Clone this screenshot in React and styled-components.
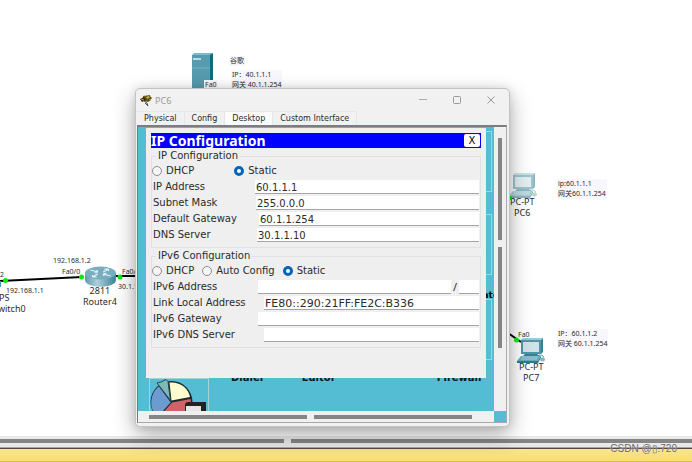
import React from "react";
import styled, { createGlobalStyle, css } from "styled-components";

const GlobalStyle = createGlobalStyle`
  * {
    box-sizing: border-box;
  }
  body {
    margin: 0;
    background: #ffffff;
    font-family: "Noto Sans", "Noto Sans CJK SC", sans-serif;
    color: #2b2b2b;
  }
`;

const Page = styled.div`
  display: flex;
  flex-direction: column;
  min-height: 100vh;
  position: relative;
  overflow: hidden;
`;

const Canvas = styled.main`
  flex: 1;
  min-height: 436px;
  position: relative;
`;

const RightSide = styled.div`
  position: absolute;
  top: 0;
  right: 0;
  bottom: 0;
  width: 182px;
`;

const Node = styled.div`
  position: absolute;
  left: ${(p) => p.$x}px;
  top: ${(p) => p.$y}px;
  opacity: ${(p) => (p.$faded ? 0.55 : 1)};
  svg {
    display: block;
  }
`;

const NodeLabel = styled.div`
  position: absolute;
  left: ${(p) => p.$x}px;
  top: ${(p) => p.$y}px;
  font-size: 9px;
  line-height: 11px;
  text-align: center;
  white-space: pre-line;
`;

const Note = styled.div`
  position: absolute;
  left: ${(p) => p.$x}px;
  top: ${(p) => p.$y}px;
  padding: 0 1px;
  font-size: 7px;
  line-height: 10px;
  white-space: pre;
  background: ${(p) => (p.$plain ? "transparent" : "#f7f7fd")};
`;

const Links = styled.svg`
  position: absolute;
  left: 0;
  top: 0;
`;

/* window */

const Window = styled.section`
  position: absolute;
  left: 135px;
  right: 182px;
  top: 88px;
  padding: 0 2px 3px 1px;
  border: 1px solid #c3c3c6;
  border-radius: 5px;
  background: #f1f1f1;
  box-shadow: 0 8px 22px rgba(0, 0, 0, 0.32), 0 0 8px rgba(0, 0, 0, 0.1);
`;

const TitleBar = styled.header`
  display: flex;
  align-items: center;
  height: 22px;
  padding: 0 11px 0 3px;
  gap: 2px;
`;

const WindowTitle = styled.span`
  flex: 1;
  font-size: 9px;
  color: #9a9a9a;
`;

const WindowButtons = styled.div`
  display: flex;
  gap: 24px;
`;

const WindowButton = styled.button`
  display: flex;
  padding: 0;
  border: 0;
  background: none;
`;

const Tabs = styled.nav`
  display: flex;
  height: 14px;
`;

const Tab = styled.button`
  padding: 0 7px;
  border: 0;
  border-top: 1px solid #e8e8e8;
  border-right: 1px solid #e6e6e6;
  background: ${(p) => (p.$active ? "#fbfbfb" : "#f1f1f1")};
  font-family: "DejaVu Sans", sans-serif;
  font-size: 8px;
  line-height: 13px;
  color: #2b2b2b;
`;

const Frame = styled.div`
  display: grid;
  grid-template-columns: 1fr 12px;
  grid-template-rows: auto 11px;
  border: 1px solid #a8a8a8;
  border-top: 2px solid #7d7d7d;
  border-left-color: #777777;
`;

const Desktop = styled.div`
  position: relative;
  padding: 1px 8px 0;
  overflow: hidden;
  background: #54bdd4;
`;

const Tile = styled.div`
  position: absolute;
  right: 2px;
  top: ${(p) => p.$top}px;
  width: 60px;
  height: 61px;
  border: 1px solid #9bd6d8;
  ${(p) =>
    p.$glow &&
    css`
      background: radial-gradient(ellipse 8px 22px at right 2px center, #2d8fc4, transparent);
    `}
`;

const SideLabel = styled.div`
  position: absolute;
  right: -5px;
  top: 162px;
  font: bold 9px/13px "DejaVu Sans", sans-serif;
  color: #000000;
`;

const Dialog = styled.form`
  position: relative;
  padding: 5px 5px 30px;
  background: #efefef;
`;

const DialogHeader = styled.div`
  display: flex;
  align-items: center;
  justify-content: space-between;
  height: 15px;
  padding-right: 1px;
  background: #0000ff;
`;

const DialogTitle = styled.h1`
  margin: 0;
  font-size: 14px;
  line-height: 15px;
  color: #ffffff;
`;

const CloseButton = styled.button`
  width: 16px;
  height: 13px;
  padding: 0;
  border: 0;
  border-radius: 2px;
  background: #fdfdfd;
  font-family: "DejaVu Sans", sans-serif;
  font-size: 10px;
  line-height: 13px;
  color: #000000;
`;

const Group = styled.fieldset`
  min-width: 0;
  margin: 2px 0 0;
  padding: 0 1px 4px 0;
  border: 1px solid #e1e1e1;
`;

const Legend = styled.legend`
  margin-left: 4px;
  padding: 0 2px;
  font-family: "DejaVu Sans", sans-serif;
  font-size: 10px;
  line-height: 12px;
`;

const RadioRow = styled.div`
  display: flex;
  align-items: center;
  gap: ${(p) => p.$gap}px;
  height: 17px;
`;

const RadioLabel = styled.label`
  display: flex;
  align-items: center;
  gap: 4px;
  font-family: "DejaVu Sans", sans-serif;
  font-size: 10px;
  line-height: 16px;
`;

const Radio = styled.input`
  appearance: none;
  width: 10px;
  height: 10px;
  margin: 0;
  border: 1px solid #8e8e8e;
  border-radius: 50%;
  background: #f6f6f6;
  &:checked {
    border: 3px solid #0563b8;
    background: #ffffff;
  }
`;

const FieldRow = styled.div`
  display: flex;
  align-items: center;
  height: 16px;
`;

const FieldLabel = styled.label`
  flex: none;
  width: ${(p) => p.$width}px;
  padding-left: 1px;
  font-family: "DejaVu Sans", sans-serif;
  font-size: 10px;
  line-height: 16px;
  white-space: nowrap;
`;

const Field = styled.input`
  flex: ${(p) => (p.$short ? "none" : "1")};
  width: ${(p) => (p.$short ? "20px" : "auto")};
  min-width: 0;
  height: 14px;
  padding: 1px 0 0 1px;
  border: 0;
  border-bottom: 1px solid #a5a5a5;
  background: #ffffff;
  font-family: "DejaVu Sans", sans-serif;
  font-size: ${(p) => (p.$large ? 11 : 10)}px;
  color: #2b2b2b;
`;

const Slash = styled.span`
  width: 8px;
  text-align: center;
  font-size: 11px;
  line-height: 14px;
`;

const Shelf = styled.div`
  display: flex;
  height: 33px;
  padding-left: 3px;
  overflow: hidden;
`;

const PieTile = styled.div`
  flex: none;
  width: 60px;
  border: 1px solid #a5d4cf;
  border-bottom: 0;
  svg {
    display: block;
  }
`;

const ShelfLabel = styled.span`
  margin-top: -7px;
  margin-left: ${(p) => p.$gap}px;
  font: bold 10px/13px "DejaVu Sans", sans-serif;
  color: #0a1a1e;
`;

const VScroll = styled.div`
  display: flex;
  flex-direction: column;
  gap: 7px;
  align-items: center;
  padding: 11px 0 63px;
  background: #f0f0f0;
`;

const HScroll = styled.div`
  display: flex;
  gap: 7px;
  align-items: center;
  padding: 0 22px 0 11px;
  background: #f0f0f0;
`;

const Thumb = styled.div`
  flex: ${(p) => p.$grow || 1};
  min-width: 4px;
  min-height: 4px;
  background: #848584;
`;

const Corner = styled.div`
  background: #54bdd4;
`;

/* bars under the canvas */

const PageScroll = styled.div`
  display: flex;
  align-items: center;
  gap: 7px;
  height: 12px;
  padding-bottom: 1px;
  background: #e9e9e9;
  border-bottom: 1px solid #a5a5a5;
`;

const StatusBar = styled.footer`
  height: 14px;
  border-top: 1px solid #51493c;
  border-bottom: 1px solid #d5bd50;
  background: linear-gradient(#f9e391, #fadf6c);
`;

const Watermark = styled.div`
  position: absolute;
  right: 15px;
  bottom: 6px;
  font: 10px/14px "Liberation Sans", sans-serif;
  color: #666666;
  text-shadow: 0 0 1px #ffffff;
`;

const PcIcon = () => (
  <svg width="30" height="26" viewBox="0 0 30 26">
    <path d="M4 2l2-2h20l-2 2z" fill="#9ccbd5" />
    <path d="M24 2l2-2v14l-2 2z" fill="#377f93" />
    <rect x="4" y="2" width="20" height="14" fill="#4c96aa" />
    <rect x="6" y="4" width="16" height="10" fill="#cfe2e8" />
    <path d="M8 16h12l3 2H6z" fill="#377f93" />
    <path d="M4 18h20l-3 5H0z" fill="#68aabc" />
    <path d="M0 23h21l3-5v2l-3 5H0z" fill="#35798c" />
    <path d="M5 19h16M4 21h16" stroke="#a9d2dc" />
    <path d="M22 17c4 0 5 1 4 3" stroke="#4c96aa" fill="none" />
    <ellipse cx="25.500" cy="21.500" rx="2.500" ry="2" fill="#7fb6c5" />
  </svg>
);

const ServerIcon = () => (
  <svg width="22" height="35" viewBox="0 0 22 35">
    <path d="M0 2l2-2h19l-2 2z" fill="#7cbac7" />
    <path d="M18 2l3-2v33l-3 2z" fill="#14697e" />
    <rect y="2" width="18" height="33" fill="#569bae" />
    <path d="M1 5h8v2H1z" fill="#b8dce3" />
    <path d="M0 15h18" stroke="#77b3c2" />
  </svg>
);

const RouterIcon = () => (
  <svg width="32" height="21" viewBox="0 0 30 21" preserveAspectRatio="none">
    <defs>
      <linearGradient id="routerSide">
        <stop offset="0" stopColor="#5d9ab0" />
        <stop offset="0.4" stopColor="#acd0db" />
        <stop offset="1" stopColor="#3d7f98" />
      </linearGradient>
    </defs>
    <path d="M0 7v7c0 9 29 9 29 0V7z" fill="url(#routerSide)" />
    <ellipse cx="14.500" cy="7" rx="14.500" ry="6.500" fill="#78adbf" />
    <path
      d="M5 4l7 2M12 6l-3 1M12 6l-1-2M24 10l-7-2M17 8l3-1M17 8l1 2M17 6l5-3M22 3h-4M22 3v2M12 8l-5 3M7 11h4M7 11V9"
      stroke="#e5f2f5"
      strokeWidth="1.200"
      fill="none"
    />
  </svg>
);

const AppIcon = () => (
  <svg width="13" height="13" viewBox="0 0 13 13">
    <path d="M3 2l7-1 1 5-3 2-5-1z" fill="#695925" />
    <path d="M0 5l4-2 2 3-4 2zM5 4l4-2 3 2-3 3z" fill="#342d13" />
    <path d="M6 3l3-1 1 2-3 1z" fill="#d0b52a" />
    <path d="M1 5l3 1M9 6l2-1" stroke="#c8a92a" />
    <path d="M4 7l3 2 1 3-3-3" fill="none" stroke="#555" />
    <circle cx="7.500" cy="5.500" r="1" fill="#397a35" />
  </svg>
);

const PieIcon = () => (
  <svg width="58" height="32" viewBox="0 0 58 32">
    <circle cx="21.500" cy="23" r="21" fill="#1d2730" />
    <path d="M20 22.500L9 7.500C2 12-1 24 3 32h10l8-9z" fill="#6c9bd1" />
    <path d="M21.500 21.500L19.500 3.500c11-1 19 6 20.500 14.500z" fill="#fffdd0" />
    <path d="M22 23.500l18.500-3.500c1 4 0 8-1 12H14.500z" fill="#cf6468" />
    <path d="M20.500 21.500L7 4l4-1 5-2.500 2 2z" fill="#7eb8b8" stroke="#26444a" />
    <path d="M35 25l2-2h19v9H35z" fill="#222" />
    <path d="M36 27h15v5H36z" fill="#e6e6e6" />
  </svg>
);

const ipFields = [
  { id: "ip", label: "IP Address", value: "60.1.1.1", width: 103 },
  { id: "mask", label: "Subnet Mask", value: "255.0.0.0", width: 104 },
  { id: "gateway", label: "Default Gateway", value: "60.1.1.254", width: 107 },
  { id: "dns", label: "DNS Server", value: "30.1.1.10", width: 105 },
];

const ipv6Fields = [
  { id: "ip6", label: "IPv6 Address", value: "", width: 106, prefix: true },
  { id: "local6", label: "Link Local Address", value: "FE80::290:21FF:FE2C:B336", width: 112, large: true },
  { id: "gateway6", label: "IPv6 Gateway", value: "", width: 106 },
  { id: "dns6", label: "IPv6 DNS Server", value: "", width: 112 },
];

const tabs = ["Physical", "Config", "Desktop", "Custom Interface"];

function ConfigGroup({ title, name, modes, gap, fields }) {
  return (
    <Group>
      <Legend>{title}</Legend>
      <RadioRow $gap={gap}>
        {modes.map((mode) => (
          <RadioLabel key={mode}>
            <Radio type="radio" name={name} defaultChecked={mode === "Static"} />
            {mode}
          </RadioLabel>
        ))}
      </RadioRow>
      {fields.map((field) => (
        <FieldRow key={field.id}>
          <FieldLabel htmlFor={field.id} $width={field.width}>
            {field.label}
          </FieldLabel>
          <Field id={field.id} defaultValue={field.value} $large={field.large} />
          {field.prefix && (
            <>
              <Slash>/</Slash>
              <Field $short aria-label="Prefix length" />
            </>
          )}
        </FieldRow>
      ))}
    </Group>
  );
}

function ConfigWindow() {
  return (
    <Window>
      <TitleBar>
        <AppIcon />
        <WindowTitle>PC6</WindowTitle>
        <WindowButtons>
          <WindowButton aria-label="Minimize">
            <svg width="10" height="10" viewBox="0 0 10 10" stroke="#aaa">
              <path d="M1 4.500h8" />
            </svg>
          </WindowButton>
          <WindowButton aria-label="Maximize">
            <svg width="10" height="10" viewBox="0 0 10 10" stroke="#999" fill="none">
              <rect x="1.500" y="1.500" width="7" height="7" rx="1" />
            </svg>
          </WindowButton>
          <WindowButton aria-label="Close">
            <svg width="10" height="10" viewBox="0 0 10 10" stroke="#999">
              <path d="M1.500 1.500l7 7M8.500 1.500l-7 7" />
            </svg>
          </WindowButton>
        </WindowButtons>
      </TitleBar>
      <Tabs>
        {tabs.map((tab) => (
          <Tab key={tab} $active={tab === "Desktop"}>
            {tab}
          </Tab>
        ))}
      </Tabs>
      <Frame>
        <Desktop>
          <Tile $top={4} />
          <Tile $top={87} $glow />
          <Tile $top={172} $glow />
          <SideLabel>ate</SideLabel>
          <Dialog>
            <DialogHeader>
              <DialogTitle>IP Configuration</DialogTitle>
              <CloseButton type="button">X</CloseButton>
            </DialogHeader>
            <ConfigGroup
              title="IP Configuration"
              name="mode4"
              modes={["DHCP", "Static"]}
              gap={40}
              fields={ipFields}
            />
            <ConfigGroup
              title="IPv6 Configuration"
              name="mode6"
              modes={["DHCP", "Auto Config", "Static"]}
              gap={8}
              fields={ipv6Fields}
            />
          </Dialog>
          <Shelf>
            <PieTile>
              <PieIcon />
            </PieTile>
            <ShelfLabel $gap={22}>Dialer</ShelfLabel>
            <ShelfLabel $gap={37}>Editor</ShelfLabel>
            <ShelfLabel $gap={101}>Firewall</ShelfLabel>
          </Shelf>
        </Desktop>
        <VScroll>
          <Thumb />
          <Thumb />
        </VScroll>
        <HScroll>
          <Thumb />
          <Thumb />
        </HScroll>
        <Corner />
      </Frame>
    </Window>
  );
}

function App() {
  return (
    <>
      <GlobalStyle />
      <Page>
        <Canvas>
          <Node $x={192} $y={53}>
            <ServerIcon />
          </Node>
          <Note $x={229} $y={56}>谷歌</Note>
          <Note $x={231} $y={70}>{"IP：40.1.1.1\n网关 40.1.1.254"}</Note>
          <Note $x={204} $y={80}>Fa0</Note>

          <Links width="140" height="300" viewBox="0 0 140 300">
            <path d="M0 281l82-4M116 276h24" stroke="#000" strokeWidth="1.800" />
            <circle cx="5.500" cy="280.500" r="2.500" fill="#00f000" />
            <circle cx="81.500" cy="277" r="2.500" fill="#00f000" />
            <circle cx="120" cy="277" r="2.500" fill="#00f000" />
            <path d="M0 281v6" stroke="#4c96aa" strokeWidth="2" />
          </Links>
          <Node $x={85} $y={266}>
            <RouterIcon />
          </Node>
          <Note $x={52} $y={256} $plain>192.168.1.2</Note>
          <Note $x={61} $y={267} $plain>Fa0/0</Note>
          <Note $x={121} $y={267} $plain>Fa0/1</Note>
          <Note $x={117} $y={282} $plain>30.1.1.1</Note>
          <Note $x={5} $y={286} $plain>192.168.1.1</Note>
          <Note $x={-1} $y={270} $plain>2</Note>
          <NodeLabel $x={83} $y={285}>{"2811\nRouter4"}</NodeLabel>
          <NodeLabel $x={-1} $y={292}>PS</NodeLabel>
          <NodeLabel $x={-7} $y={303}>Switch0</NodeLabel>

          <RightSide>
            <Node $x={-1} $y={173} $faded>
              <PcIcon />
            </Node>
            <NodeLabel $x={0} $y={196}>{"PC-PT\nPC6"}</NodeLabel>
            <Note $x={47} $y={179}>{"ip:60.1.1.1\n网关60.1.1.254"}</Note>
            <Links width="40" height="360" viewBox="0 0 40 360">
              <path d="M-2 333l13 9" stroke="#000" strokeWidth="2" />
              <circle cx="6.500" cy="340" r="2.500" fill="#00f000" />
              <circle cx="0" cy="198" r="2" fill="#00f000" />
            </Links>
            <Node $x={7} $y={338}>
              <PcIcon />
            </Node>
            <Note $x={7} $y={330} $plain>Fa0</Note>
            <NodeLabel $x={9} $y={361}>{"PC-PT\nPC7"}</NodeLabel>
            <Note $x={47} $y={329}>{"IP：60.1.1.2\n网关 60.1.1.254"}</Note>
          </RightSide>
          <ConfigWindow />
        </Canvas>
        <PageScroll>
          <Thumb $grow={284} />
          <Thumb $grow={401} />
        </PageScroll>
        <StatusBar />
        <Watermark>CSDN @▯.720</Watermark>
      </Page>
    </>
  );
}

export default App;
